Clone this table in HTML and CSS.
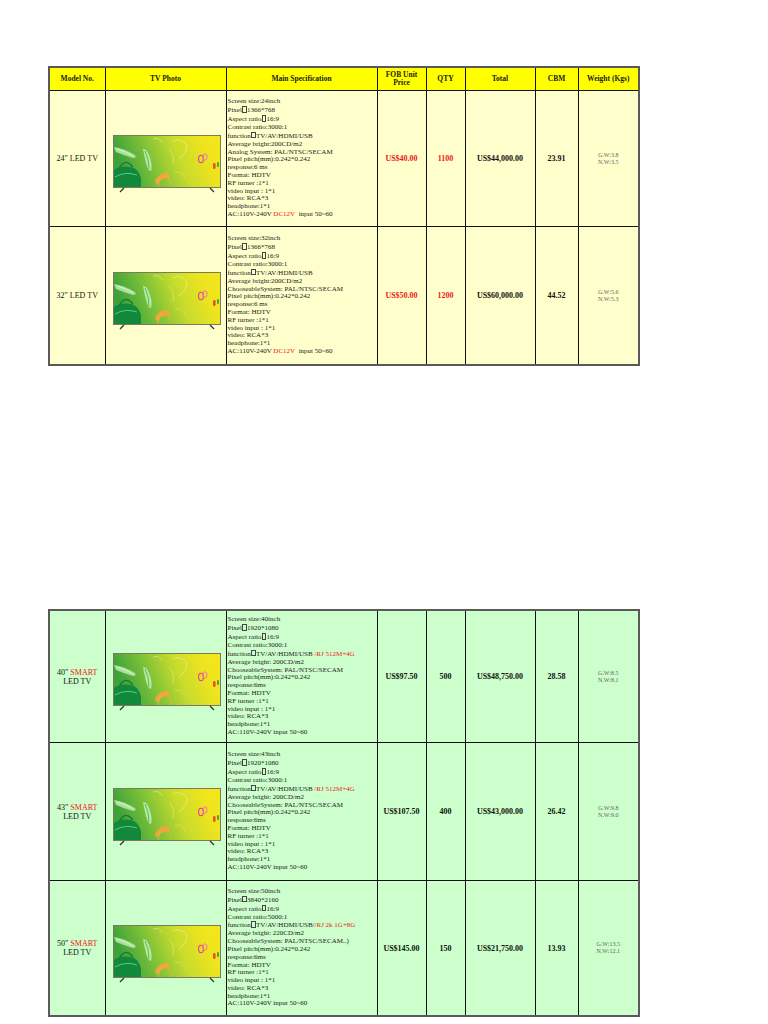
FILE: index.html
```html
<!DOCTYPE html>
<html>
<head>
<meta charset="utf-8">
<link rel="stylesheet" href="styles.css">
<title>TV Price List</title>
</head>
<body>
<div class="page">
  <table class="sheet yellow">
    <colgroup>
      <col class="c-model"><col class="c-photo"><col class="c-spec"><col class="c-fob"><col class="c-qty"><col class="c-total"><col class="c-cbm"><col class="c-weight">
    </colgroup>
    <tr class="head">
      <th>Model No.</th><th>TV Photo</th><th>Main Specification</th><th>FOB Unit<br>Price</th><th>QTY</th><th>Total</th><th>CBM</th><th>Weight (Kgs)</th>
    </tr>
    <tr class="r1">
      <td class="model">24" LED TV</td>
      <td class="photo"><svg class="tv" viewBox="0 0 108 58" width="108" height="58"><use href="#tvart"/></svg></td>
      <td class="spec">Screen size:24inch<br>Pixel<span class="tofu"></span>1366*768<br>Aspect ratio<span class="tofu"></span>16:9<br>Contrast ratio:3000:1<br>function<span class="tofu"></span>TV/AV/HDMI/USB<br>Average bright:200CD/m2<br>Analog System: PAL/NTSC/SECAM<br>Pixel pitch(mm):0.242*0.242<br>response:6 ms<br>Format: HDTV<br>RF turner :1*1<br>video input : 1*1<br>video: RCA*3<br>headphone:1*1<br>AC:110V-240V <span class="red">DC12V</span>&nbsp; input 50~60</td>
      <td class="num red">US$40.00</td>
      <td class="num red">1100</td>
      <td class="num">US$44,000.00</td>
      <td class="num">23.91</td>
      <td class="weight">G.W:3.8<br>N.W:3.5</td>
    </tr>
    <tr class="r2">
      <td class="model">32" LED TV</td>
      <td class="photo"><svg class="tv" viewBox="0 0 108 58" width="108" height="58"><use href="#tvart"/></svg></td>
      <td class="spec">Screen size:32inch<br>Pixel<span class="tofu"></span>1366*768<br>Aspect ratio<span class="tofu"></span>16:9<br>Contrast ratio:3000:1<br>function<span class="tofu"></span>TV/AV/HDMI/USB<br>Average bright:200CD/m2<br>ChooseableSystem: PAL/NTSC/SECAM<br>Pixel pitch(mm):0.242*0.242<br>response:6 ms<br>Format: HDTV<br>RF turner :1*1<br>video input : 1*1<br>video: RCA*3<br>headphone:1*1<br>AC:110V-240V <span class="red">DC12V</span>&nbsp; input 50~60</td>
      <td class="num red">US$50.00</td>
      <td class="num red">1200</td>
      <td class="num">US$60,000.00</td>
      <td class="num">44.52</td>
      <td class="weight">G.W:5.6<br>N.W:5.3</td>
    </tr>
  </table>

  <table class="sheet green second">
    <colgroup>
      <col class="c-model"><col class="c-photo"><col class="c-spec"><col class="c-fob"><col class="c-qty"><col class="c-total"><col class="c-cbm"><col class="c-weight">
    </colgroup>
    <tr class="g1">
      <td class="model">40" <span class="red">SMART</span><br>LED TV</td>
      <td class="photo"><svg class="tv" viewBox="0 0 108 58" width="108" height="58"><use href="#tvart"/></svg></td>
      <td class="spec">Screen size:40inch<br>Pixel<span class="tofu"></span>1920*1080<br>Aspect ratio<span class="tofu"></span>16:9<br>Contrast ratio:3000:1<br>function<span class="tofu"></span>TV/AV/HDMI/USB <span class="red">/RJ 512M+4G</span><br>Average bright: 200CD/m2<br>ChooseableSystem: PAL/NTSC/SECAM<br>Pixel pitch(mm):0.242*0.242<br>response:6ms<br>Format: HDTV<br>RF turner :1*1<br>video input : 1*1<br>video: RCA*3<br>headphone:1*1<br>AC:110V-240V input 50~60</td>
      <td class="num">US$97.50</td>
      <td class="num">500</td>
      <td class="num">US$48,750.00</td>
      <td class="num">28.58</td>
      <td class="weight">G.W:8.5<br>N.W:8.1</td>
    </tr>
    <tr class="g2">
      <td class="model">43" <span class="red">SMART</span><br>LED TV</td>
      <td class="photo"><svg class="tv" viewBox="0 0 108 58" width="108" height="58"><use href="#tvart"/></svg></td>
      <td class="spec">Screen size:43inch<br>Pixel<span class="tofu"></span>1920*1080<br>Aspect ratio<span class="tofu"></span>16:9<br>Contrast ratio:3000:1<br>function<span class="tofu"></span>TV/AV/HDMI/USB <span class="red">/RJ 512M+4G</span><br>Average bright: 200CD/m2<br>ChooseableSystem: PAL/NTSC/SECAM<br>Pixel pitch(mm):0.242*0.242<br>response:6ms<br>Format: HDTV<br>RF turner :1*1<br>video input : 1*1<br>video: RCA*3<br>headphone:1*1<br>AC:110V-240V input 50~60</td>
      <td class="num">US$107.50</td>
      <td class="num">400</td>
      <td class="num">US$43,000.00</td>
      <td class="num">26.42</td>
      <td class="weight">G.W:9.8<br>N.W:9.0</td>
    </tr>
    <tr class="g3">
      <td class="model">50" <span class="red">SMART</span><br>LED TV</td>
      <td class="photo"><svg class="tv" viewBox="0 0 108 58" width="108" height="58"><use href="#tvart"/></svg></td>
      <td class="spec">Screen size:50inch<br>Pixel<span class="tofu"></span>3840*2160<br>Aspect ratio<span class="tofu"></span>16:9<br>Contrast ratio:5000:1<br>function<span class="tofu"></span>TV/AV/HDMI/USB/<span class="red">/RJ 2k 1G+8G</span><br>Average bright: 220CD/m2<br>ChooseableSystem: PAL/NTSC/SECAM..)<br>Pixel pitch(mm):0.242*0.242<br>response:6ms<br>Format: HDTV<br>RF turner :1*1<br>video input : 1*1<br>video: RCA*3<br>headphone:1*1<br>AC:110V-240V input 50~60</td>
      <td class="num">US$145.00</td>
      <td class="num">150</td>
      <td class="num">US$21,750.00</td>
      <td class="num">13.93</td>
      <td class="weight">G.W:13.5<br>N.W:12.1</td>
    </tr>
  </table>
</div>

<svg class="defs" width="0" height="0" aria-hidden="true">
  <defs>
    <linearGradient id="tvbg" x1="0" y1="0.2" x2="1" y2="0">
      <stop offset="0" stop-color="#3ea23a"/>
      <stop offset="0.28" stop-color="#7fc238"/>
      <stop offset="0.55" stop-color="#c8dc2c"/>
      <stop offset="0.8" stop-color="#eee41e"/>
      <stop offset="1" stop-color="#f6e61a"/>
    </linearGradient>
    <clipPath id="scr"><rect x="1" y="1" width="106" height="51"/></clipPath>
    <g id="tvart">
      <g clip-path="url(#scr)">
        <rect x="0" y="0" width="108" height="53" fill="url(#tvbg)"/>
        <path d="M1 12 Q10 13 22 20 Q24 23 20 23 Q10 20 3 17 Z" fill="#a8e09a"/>
        <path d="M4 14 Q12 16 20 21" stroke="#e0f6d8" stroke-width="0.8" fill="none"/>
        <path d="M30 14 Q34 14 36 20 Q40 30 38 36 Q35 36 33 28 Q31 20 30 14 Z" fill="#b2eaa0"/>
        <path d="M32 16 Q36 24 36 34" stroke="#3aa04a" stroke-width="0.7" fill="none"/>
        <path d="M60 6 Q68 2 74 10 Q74 18 66 24" stroke="#e4ee80" stroke-width="0.8" fill="none"/>
        <path d="M56 14 Q62 20 60 30" stroke="#e0e878" stroke-width="0.7" fill="none"/>
        <path d="M40 4 Q46 2 50 8" stroke="#d6ea90" stroke-width="0.7" fill="none"/>
        <path d="M0 36 Q6 30 18 32 Q26 34 28 44 L28 52 L0 52 Z" fill="#11883a"/>
        <path d="M6 34 Q12 22 20 32" stroke="#1a7a38" stroke-width="1.4" fill="none"/>
        <path d="M2 42 Q12 36 24 40" stroke="#5ccc84" stroke-width="1" fill="none"/>
        <path d="M42 46 Q46 38 54 38 Q58 40 56 43 L50 44 Q46 46 44 50 Z" fill="#f2a63a"/>
        <path d="M47 44 L45 52 M55 42 L58 50" stroke="#eeb048" stroke-width="0.9" fill="none"/>
        <path d="M62 38 Q70 34 72 44" stroke="#f2d060" stroke-width="0.8" fill="none"/>
        <ellipse cx="88" cy="24" rx="2.4" ry="3.8" stroke="#e83ca0" stroke-width="1.1" fill="none"/>
        <ellipse cx="92" cy="22" rx="2" ry="3.2" stroke="#f06ab8" stroke-width="0.9" fill="none"/>
        <rect x="100" y="28" width="2.6" height="6" rx="1.3" fill="#f0501e"/>
        <rect x="104" y="27" width="2" height="5" rx="1" fill="#38a848"/>
      </g>
      <rect x="0.5" y="0.5" width="107" height="52" fill="none" stroke="#7a7a62" stroke-width="1"/>
      <path d="M11 53 L7 57" stroke="#333" stroke-width="1.2"/>
      <path d="M97 53 L101 57" stroke="#333" stroke-width="1.2"/>
    </g>
  </defs>
</svg>
</body>
</html>
```

FILE: styles.css
```css
html, body {
  margin: 0;
  padding: 0;
  background: #ffffff;
}

body {
  font-family: "Liberation Serif", "Times New Roman", serif;
  color: #111;
}

.page {
  padding: 66px 0 0 48px;
}

.defs {
  position: absolute;
  width: 0;
  height: 0;
}

.sheet {
  border-collapse: collapse;
  table-layout: fixed;
  width: 591px;
  border: 2px solid #5a5a5a;
}

.second {
  margin-top: 243px;
}

.c-model { width: 56px; }
.c-photo { width: 121px; }
.c-spec { width: 151px; }
.c-fob { width: 49px; }
.c-qty { width: 39px; }
.c-total { width: 70px; }
.c-cbm { width: 43px; }
.c-weight { width: 61px; }

.sheet th,
.sheet td {
  border: 1px solid #111;
  padding: 0;
  vertical-align: middle;
  text-align: center;
}

.yellow td { background: #ffffcc; }
.green td { background: #ccffcc; }

.head th {
  background: #ffff00;
  height: 22px;
  font-weight: bold;
  font-size: 7.5px;
  line-height: 8.5px;
  color: #1a1a1a;
}

.r1 td { height: 135px; }
.r2 td { height: 137px; }
.g1 td { height: 131px; }
.g2 td { height: 137px; }
.g3 td { height: 134px; }

.model {
  font-size: 8px;
  line-height: 9px;
  color: #111;
}

.photo {
  line-height: 0;
}

.tv {
  display: inline-block;
  margin-top: 11px;
  margin-left: 2px;
}

.spec {
  text-align: left !important;
  font-size: 7px;
  line-height: 7.8px;
  padding-left: 1px !important;
  color: #222;
  white-space: nowrap;
  overflow: hidden;
}

.tofu {
  display: inline-block;
  width: 2.5px;
  height: 4.5px;
  border: 0.7px solid #444;
  vertical-align: -0.3px;
  margin: 0 0.3px;
}

.num {
  font-size: 8px;
  font-weight: bold;
  color: #111;
}

.red {
  color: #f01818;
}

.weight {
  font-size: 6px;
  line-height: 7px;
  color: #666;
}
```
